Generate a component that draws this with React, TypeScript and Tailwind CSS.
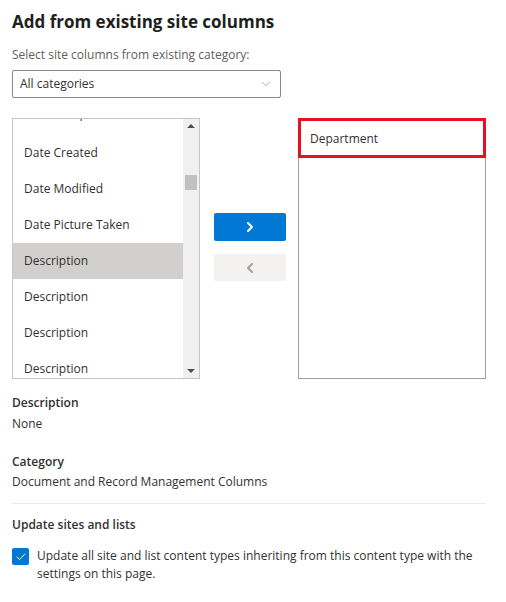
import { ChevronDown, ChevronRight, ChevronLeft, Check } from "lucide-react";

const items = [
  "Date Completed",
  "Date Created",
  "Date Modified",
  "Date Picture Taken",
  "Description",
  "Description",
  "Description",
  "Description",
];

export default function App() {
  return (
    <main
      className="w-[506px] h-[602px] bg-white px-3 pt-[10px] text-[#323130] overflow-hidden"
      style={{ fontFamily: '"Open Sans", "Noto Sans", sans-serif' }}
    >
      <h1 className="text-[17px] leading-6 font-bold text-[#201f1e]">Add from existing site columns</h1>

      <p className="mt-[13px] text-[12px] leading-4 text-[#605e5c]">Select site columns from existing category:</p>

      {/* Category dropdown */}
      <div className="mt-[7px] w-[269px] h-[28px] border border-[#8a8886] rounded-[2px] flex items-center justify-between pl-[7px] pr-[7px]">
        <span className="text-[12px] text-[#323130]">All categories</span>
        <ChevronDown className="w-[14px] h-[14px] text-[#a19f9d]" strokeWidth={1.5} />
      </div>

      {/* Lists */}
      <div className="mt-[20px] flex items-start">
        <div className="w-[188px] h-[261px] border border-[#c8c6c4] flex overflow-hidden">
          <div className="flex-1 overflow-hidden">
            <ul className="-mt-[20px]">
              {items.map((label, i) => (
                <li
                  key={i}
                  className={`h-9 flex items-center pl-[11px] text-[12px] text-[#323130] ${i === 4 ? "bg-[#d2d0ce]" : ""} ${i === 0 ? "pb-[7px]" : ""}`}
                >
                  {label}
                </li>
              ))}
            </ul>
          </div>
          {/* Scrollbar */}
          <div className="w-[16px] bg-[#f0f0f0] flex flex-col items-center justify-between py-[5px]">
            <div className="flex flex-col items-center">
              <span className="w-0 h-0 border-l-[4px] border-r-[4px] border-b-[4px] border-l-transparent border-r-transparent border-b-[#505050]" />
              <span className="mt-[47px] w-[12px] h-[15px] bg-[#c1c1c1]" />
            </div>
            <span className="w-0 h-0 border-l-[4px] border-r-[4px] border-t-[4px] border-l-transparent border-r-transparent border-t-[#505050]" />
          </div>
        </div>

        <div className="ml-[14px] mt-[95px] flex flex-col gap-[13px]">
          <button className="w-[72px] h-[28px] rounded-[2px] bg-[#0078d4] flex items-center justify-center">
            <ChevronRight className="w-[16px] h-[16px] text-white" strokeWidth={3} />
          </button>
          <button className="w-[72px] h-[27px] rounded-[2px] bg-[#f3f2f1] flex items-center justify-center">
            <ChevronLeft className="w-[16px] h-[16px] text-[#a19f9d]" strokeWidth={3} />
          </button>
        </div>

        <div className="ml-[12px] w-[188px] h-[261px] border border-[#a19f9d] relative">
          <div className="absolute -left-px -top-px w-[188px] h-[40px] border-[3px] border-[#e81123] flex items-center pl-[9px] pt-px text-[12px] text-[#323130]">
            Department
          </div>
        </div>
      </div>

      {/* Details */}
      <div className="mt-[14px]">
        <h2 className="text-[12px] leading-5 font-semibold text-[#323130]">Description</h2>
        <p className="mt-[1px] text-[12px] leading-5 text-[#323130]">None</p>
        <h2 className="mt-[18px] text-[12px] leading-5 font-semibold text-[#323130]">Category</h2>
        <p className="text-[12px] leading-5 text-[#323130]">Document and Record Management Columns</p>
      </div>

      <div className="mt-[11px] w-[474px] border-t border-[#edebe9]" />

      <h2 className="mt-[11px] text-[12px] leading-5 font-semibold text-[#323130]">Update sites and lists</h2>

      <label className="mt-[12px] flex items-start gap-2">
        <span className="mt-px w-[17px] h-[17px] shrink-0 rounded-[2px] bg-[#0078d4] flex items-center justify-center">
          <Check className="w-[12px] h-[12px] text-white" strokeWidth={2} />
        </span>
        <span className="text-[12px] leading-[18px] text-[#323130] w-[440px]">
          Update all site and list content types inheriting from this content type with the settings on this page.
        </span>
      </label>
    </main>
  );
}
